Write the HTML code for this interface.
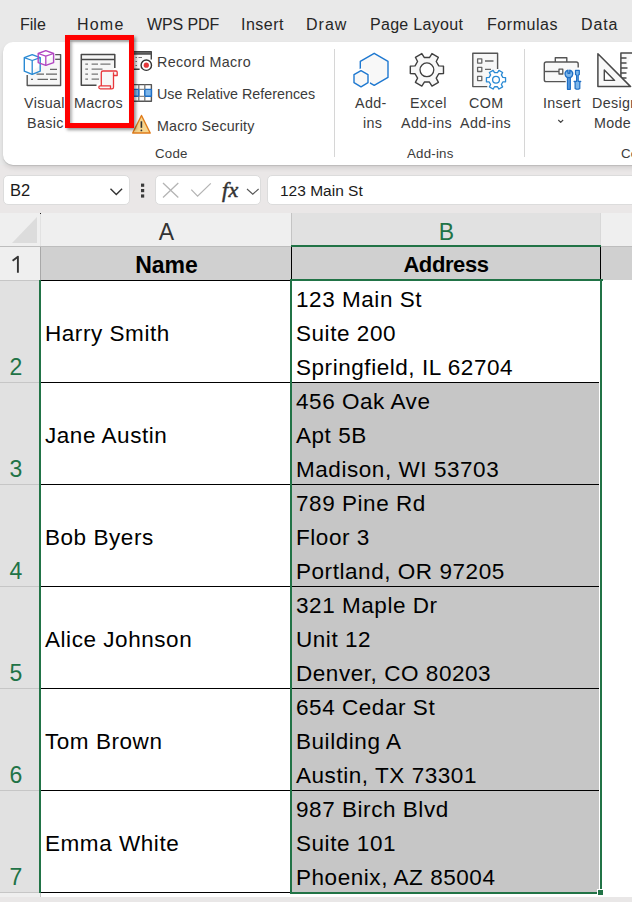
<!DOCTYPE html>
<html><head><meta charset="utf-8">
<style>
*{margin:0;padding:0;box-sizing:border-box}
html,body{width:632px;height:902px;overflow:hidden;background:#e9e9e9;font-family:"Liberation Sans",sans-serif}
.a{position:absolute;white-space:nowrap}
.menu{font-size:16px;color:#262626;top:15px;line-height:20px}
.rib{left:3px;top:42px;width:700px;height:123px;background:#fff;border-radius:10px;box-shadow:0 1px 1px rgba(0,0,0,.12),0 3px 5px rgba(0,0,0,.10)}
.rt{font-size:14.3px;color:#3b3b3b;line-height:17px;letter-spacing:0.35px}
.gl{font-size:13.3px;letter-spacing:0.2px}
.sep{width:1px;background:#d6d6d6}
.grid{left:0;top:213px;width:632px;height:689px;background:#fff}
.hdr{background:#efefef}
.hs{background:#e1e1e1}
.cell{font-size:22.5px;color:#000;line-height:34px;letter-spacing:0.55px}
.rn{font-size:23px;color:#217346;line-height:20px;text-align:center;width:32px;left:0}
</style></head><body>
<!-- menu -->
<div class="a menu" style="left:20px">File</div>
<div class="a menu" style="left:77px;letter-spacing:1.2px">Home</div>
<div class="a menu" style="left:147px;letter-spacing:-0.1px">WPS PDF</div>
<div class="a menu" style="left:241px;letter-spacing:0.5px">Insert</div>
<div class="a menu" style="left:306px;letter-spacing:1px">Draw</div>
<div class="a menu" style="left:370px;letter-spacing:0.3px">Page Layout</div>
<div class="a menu" style="left:487px;letter-spacing:0.55px">Formulas</div>
<div class="a menu" style="left:581px;letter-spacing:0.9px">Data</div>

<!-- ribbon -->
<div class="a" style="left:0;top:165px;width:632px;height:48px;background:#eae7e7"></div>

<div class="a rib"></div>
<div class="a sep" style="left:334px;top:49px;height:108px"></div>
<div class="a sep" style="left:524px;top:49px;height:108px"></div>

<div class="a rt" style="left:24px;top:95px">Visual</div>
<div class="a rt" style="left:27px;top:115px">Basic</div>
<div class="a rt" style="left:74px;top:95px">Macros</div>
<div class="a rt" style="left:157px;top:54px">Record Macro</div>
<div class="a rt" style="left:157px;top:86px;letter-spacing:0">Use Relative References</div>
<div class="a rt" style="left:157px;top:118px;letter-spacing:0.15px">Macro Security</div>
<div class="a rt gl" style="left:155px;top:145px">Code</div>

<div class="a rt" style="left:355px;top:95px">Add-</div>
<div class="a rt" style="left:363px;top:115px">ins</div>
<div class="a rt" style="left:410px;top:95px">Excel</div>
<div class="a rt" style="left:401px;top:115px">Add-ins</div>
<div class="a rt" style="left:469px;top:95px">COM</div>
<div class="a rt" style="left:460px;top:115px">Add-ins</div>
<div class="a rt gl" style="left:407px;top:145px">Add-ins</div>

<div class="a rt" style="left:543px;top:95px">Insert</div>
<div class="a rt" style="left:592px;top:95px">Design</div>
<div class="a rt" style="left:594px;top:115px">Mode</div>
<div class="a rt gl" style="left:621px;top:145px">Code</div>

<svg class="a" style="left:0;top:0" width="632" height="170" viewBox="0 0 632 170" fill="none" stroke-linejoin="round">
<!-- Visual Basic -->
<path d="M55.2,54.6 H60.6 V85.5 H27.2 V74.9" stroke="#555" stroke-width="1.4" fill="#f7f7f7"/>
<path d="M55.2,59.3 H60.6" stroke="#555" stroke-width="1.3"/>
<g stroke="#666" stroke-width="1.3"><path d="M50,69.3H57 M36.5,74.2H44 M46,74.2H57 M31,79.3H33 M37.5,79.3H48 M50,79.3H57"/></g>
<path d="M32.2,54.6 L40.2,57.6 V71.2 L32.2,74.4 L24.3,71.2 V57.6 Z" stroke="#2a8ad4" stroke-width="1.4" fill="none"/>
<path d="M24.3,57.6 L32.2,60.5 L40.2,57.6 M32.2,60.5 V74.4" stroke="#2a8ad4" stroke-width="1.3"/>
<path d="M45.8,50.6 L53.6,53.5 V62.6 L45.8,65.4 L38.2,62.6 V53.5 Z" stroke="#b146c2" stroke-width="1.4" fill="none"/>
<path d="M38.2,53.5 L45.8,56.2 L53.6,53.5 M45.8,56.2 V65.4" stroke="#b146c2" stroke-width="1.3"/>
<!-- Macros -->
<path d="M96.5,85.3 H81.3 V54.6 H114.8 V68" stroke="#484848" stroke-width="1.5" fill="#f6f6f6"/>
<path d="M81.3,59.4 H114.8" stroke="#484848" stroke-width="1.5"/>
<g stroke="#777" stroke-width="1.3"><path d="M85.3,64.1H88 M91.6,64.1H98 M100.4,64.1H110.5 M85.3,69.1H88 M91.6,69.1H102.5 M85.3,74.2H88 M91.6,74.2H98 M85.3,79.1H88 M91.6,79.1H99"/></g>
<path d="M101.3,85.8 V72.8 Q101.3,71 103,71 H116 Q117.2,71 117.2,72.3 V75.5 H113.5 V87.2 Q113.5,88.8 111.8,88.8 H100.3 Q98.8,88.8 98.8,87.3 Q98.8,85.8 100.3,85.8 H110.5 V88.8" stroke="#e8363b" stroke-width="1.3" fill="#f7f7f7"/>
<path d="M113.5,75.5 V72.3" stroke="#e8363b" stroke-width="1.3"/>
<!-- Record Macro -->
<path d="M139.6,69.3 H133 V51.8 H151.3 V59.5" stroke="#444" stroke-width="1.4" fill="#fafafa"/>
<path d="M133,53.5 H151.3" stroke="#555" stroke-width="2.6"/>
<g stroke="#777" stroke-width="1.2"><path d="M135.5,57.5H137 M138.5,57.5H142 M135.5,61.5H137 M135.5,65.5H137"/></g>
<circle cx="146.3" cy="65.2" r="5.2" stroke="#333" stroke-width="1.4" fill="#fff"/>
<circle cx="146.3" cy="65.2" r="2.6" fill="#e5383b"/>
<!-- Relative refs -->
<rect x="133" y="84.6" width="18.4" height="16.6" stroke="#555" stroke-width="1.4" fill="#fff"/>
<path d="M138.8,84.6V101.2 M144.8,84.6V101.2" stroke="#777" stroke-width="1.3"/>
<rect x="133" y="89.4" width="5.8" height="6.9" stroke="#1f6fc5" stroke-width="1.4" fill="#7db6ea"/>
<rect x="144.8" y="89.4" width="6.6" height="6.9" stroke="#1f6fc5" stroke-width="1.4" fill="#7db6ea"/>
<path d="M138.8,89.4H144.8 M138.8,96.3H144.8" stroke="#888" stroke-width="1.2"/>
<!-- warning -->
<path d="M141.5,115.5 L150.2,133 H132.7 Z" stroke="#e07b1a" stroke-width="1.4" fill="#f6d58e"/>
<path d="M141.4,121.3V127.8" stroke="#333" stroke-width="1.6"/>
<circle cx="141.4" cy="130.4" r="0.9" fill="#333"/>
<!-- Add-ins -->
<path d="M374.2,53.3 L388,61.3 V77.4 L374.2,85.4 L360.3,77.4 V61.3 Z" stroke="#1e78d0" stroke-width="1.4" fill="#f8f8f8"/>
<path d="M361,70.6 L368,74.6 V82.7 L361,86.8 L354,82.7 V74.6 Z" stroke="#fff" stroke-width="4" fill="#f8f8f8"/>
<path d="M361,70.6 L368,74.6 V82.7 L361,86.8 L354,82.7 V74.6 Z" stroke="#1e78d0" stroke-width="1.4" fill="#f8f8f8"/>
<!-- gear -->
<path d="M438.77,65.87 L443.49,66.09 L443.49,73.51 L438.77,73.73 L436.24,78.11 L438.41,82.31 L431.98,86.02 L429.43,82.04 L424.37,82.04 L421.82,86.02 L415.39,82.31 L417.56,78.11 L415.03,73.73 L410.31,73.51 L410.31,66.09 L415.03,65.87 L417.56,61.49 L415.39,57.29 L421.82,53.58 L424.37,57.56 L429.43,57.56 L431.98,53.58 L438.41,57.29 L436.24,61.49 Z" stroke="#404040" stroke-width="1.4" fill="#f8f8f8"/>
<circle cx="426.9" cy="69.8" r="6.9" stroke="#404040" stroke-width="1.3" fill="#fff"/>
<!-- COM -->
<path d="M487.3,86.6 H472.8 V53.3 H497.6 V69" stroke="#555" stroke-width="1.4" fill="#f7f7f7"/>
<g stroke="#666" stroke-width="1.3" fill="#fff"><rect x="477.6" y="58.9" width="4.2" height="4.2"/><rect x="477.6" y="67.3" width="4.2" height="4.2"/><rect x="477.6" y="76.4" width="4.2" height="4.2"/></g>
<path d="M485,61H493.5 M485,69.3H491" stroke="#666" stroke-width="1.3"/>
<path d="M502.83,77.44 L505.56,77.56 L505.56,81.84 L502.83,81.96 L501.38,84.49 L502.63,86.91 L498.93,89.05 L497.46,86.75 L494.54,86.75 L493.07,89.05 L489.37,86.91 L490.62,84.49 L489.17,81.96 L486.44,81.84 L486.44,77.56 L489.17,77.44 L490.62,74.91 L489.37,72.49 L493.07,70.35 L494.54,72.65 L497.46,72.65 L498.93,70.35 L502.63,72.49 L501.38,74.91 Z" stroke="#2a8ad4" stroke-width="1.3" fill="#fff"/>
<circle cx="496" cy="79.7" r="3.4" stroke="#2a8ad4" stroke-width="1.3" fill="#fff"/>
<!-- toolbox -->
<path d="M565.7,81.6 H546.2 Q544.3,81.6 544.3,79.7 V63.9 Q544.3,62 546.2,62 H576.3 Q578.2,62 578.2,63.9 V67.4" stroke="#555" stroke-width="1.4" fill="#f8f8f8"/>
<path d="M555.3,62 V57.8 H566.8 V62" stroke="#555" stroke-width="1.4"/>
<path d="M544.3,71.5 H559" stroke="#555" stroke-width="1.4"/>
<rect x="559" y="69.2" width="3.8" height="4.8" stroke="#555" stroke-width="1.3" fill="#fff"/>
<path d="M568,70.1 A3.9,3.9 0 1 0 569.8,70.1 V73.2 H568 Z" stroke="#1f6fc5" stroke-width="1.4" fill="#7db6ea"/>
<path d="M567.5,77.6 H570.3 V89.3 H567.5 Z" fill="#5c9ee0" stroke="#1f6fc5" stroke-width="1.3"/>
<path d="M575.5,70.3 H579.3 V74.5 L578.2,75.3 V81.3 H580.8 L579.8,82.3 V88.5 Q577.4,90 575.1,88.5 V82.3 L574,81.3 H576.6 V75.3 L575.5,74.5 Z" stroke="#1f6fc5" stroke-width="1.2" fill="#7db6ea"/>
<!-- design mode -->
<path d="M620.9,80 V53 H632" stroke="#484848" stroke-width="1.5" fill="#f8f8f8"/>
<path d="M621,58H626.5 M621,63H626.5 M621,68H627.5 M621,73H626.5 M621,78H626.5" stroke="#484848" stroke-width="1.3"/>
<path d="M597.9,53.8 V86.6 H630.6 Z" stroke="#484848" stroke-width="1.5" fill="#f8f8f8"/>
<path d="M604.3,70 V80.4 H614.6 Z" stroke="#484848" stroke-width="1.4" fill="#fff"/>
<path d="M558.3,120 L560.7,122.4 L563.1,120" stroke="#444" stroke-width="1.2"/>
</svg>
<!-- red box -->
<div class="a" style="left:65px;top:35px;width:69px;height:93px;border:5px solid #ff0000;box-shadow:2px 2px 3px rgba(0,0,0,.42), inset 2px 2px 3px rgba(0,0,0,.3)"></div>

<!-- formula bar -->
<div class="a" style="left:3px;top:175px;width:127px;height:30px;background:#fff;border:1px solid #dcdcdc;border-radius:5px"></div>
<div class="a" style="left:10px;top:181px;font-size:16.5px;color:#1a1a1a;line-height:18px">B2</div>
<div class="a" style="left:155px;top:175px;width:106px;height:30px;background:#fff;border:1px solid #dcdcdc;border-radius:5px"></div>
<div class="a" style="left:267px;top:175px;width:400px;height:30px;background:#fff;border:1px solid #dcdcdc;border-radius:5px"></div>
<div class="a" style="left:280px;top:182px;font-size:15.5px;color:#1a1a1a;line-height:18px;letter-spacing:0px">123 Main St</div>

<svg class="a" style="left:0;top:170px" width="632" height="40" viewBox="0 170 632 40" fill="none">
<path d="M110.5,188.8 L116.3,194.6 L122.1,188.8" stroke="#333" stroke-width="1.4"/>
<rect x="141" y="183.6" width="3.2" height="3.2" fill="#3a3a3a"/><rect x="141" y="189" width="3.2" height="3.2" fill="#3a3a3a"/><rect x="141" y="194.4" width="3.2" height="3.2" fill="#3a3a3a"/>
<path d="M163,183 L178.3,197.5 M178.3,183 L163,197.5" stroke="#b4b4b4" stroke-width="1.3"/>
<path d="M191.3,189.6 L197.6,196.2 L210.8,183.4" stroke="#b4b4b4" stroke-width="1.3"/>
<path d="M247,189 L252.8,194.2 L258.6,189" stroke="#555" stroke-width="1.1"/>
</svg>
<div class="a" style="left:222px;top:178px;font-family:'Liberation Serif',serif;font-style:italic;font-size:22px;color:#333;line-height:24px;letter-spacing:0.5px;-webkit-text-stroke:0.5px #333">fx</div>
<!-- grid -->
<div class="a grid"></div>
<div class="a hdr" style="left:0;top:213px;width:632px;height:33px"></div>
<div class="a hs" style="left:292px;top:213px;width:308px;height:32px"></div>
<svg class="a" style="left:0;top:213px" width="40" height="33"><polygon points="12,30 37,30 37,4" fill="#dcdcdc"/></svg>
<div class="a" style="left:40px;top:214px;width:1px;height:32px;background:#e2e2e2"></div><div class="a" style="left:40px;top:213px;width:1px;height:1px;background:#222"></div>
<div class="a" style="left:291px;top:213px;width:1px;height:33px;background:#c4c4c4"></div>
<div class="a" style="left:600px;top:213px;width:1px;height:33px;background:#d8d8d8"></div>
<div class="a" style="left:0;top:246px;width:632px;height:1px;background:#bdbdbd"></div>
<div class="a" style="left:291px;top:245px;width:310px;height:2px;background:#217346"></div>
<div class="a hdr" style="left:0;top:247px;width:40px;height:655px"></div>
<div class="a hs" style="left:0;top:281px;width:39px;height:612px"></div>
<div class="a" style="left:40px;top:247px;width:1px;height:34px;background:#a8a8a8"></div>
<div class="a" style="left:0;top:280px;width:40px;height:1px;background:#c6c6c6"></div>
<div class="a" style="left:0;top:382px;width:40px;height:1px;background:#c6c6c6"></div>
<div class="a" style="left:0;top:484px;width:40px;height:1px;background:#c6c6c6"></div>
<div class="a" style="left:0;top:586px;width:40px;height:1px;background:#c6c6c6"></div>
<div class="a" style="left:0;top:688px;width:40px;height:1px;background:#c6c6c6"></div>
<div class="a" style="left:0;top:790px;width:40px;height:1px;background:#c6c6c6"></div>
<div class="a" style="left:0;top:892px;width:40px;height:1px;background:#c6c6c6"></div>
<div class="a" style="left:39px;top:280px;width:2px;height:613px;background:#217346"></div>
<div class="a" style="left:41px;top:247px;width:591px;height:33px;background:#d0d0d0"></div>
<div class="a" style="left:292px;top:383px;width:307px;height:509px;background:#c6c6c6"></div>
<div class="a" style="left:41px;top:280px;width:560px;height:1px;background:#000"></div>
<div class="a" style="left:41px;top:382px;width:558px;height:1px;background:#000"></div>
<div class="a" style="left:41px;top:484px;width:558px;height:1px;background:#000"></div>
<div class="a" style="left:41px;top:586px;width:558px;height:1px;background:#000"></div>
<div class="a" style="left:41px;top:688px;width:558px;height:1px;background:#000"></div>
<div class="a" style="left:41px;top:790px;width:558px;height:1px;background:#000"></div>
<div class="a" style="left:41px;top:892px;width:558px;height:1px;background:#000"></div>
<div class="a" style="left:291px;top:247px;width:1px;height:646px;background:#000"></div>
<div class="a" style="left:600px;top:247px;width:1px;height:34px;background:#000"></div>
<div class="a" style="left:290px;top:279px;width:313px;height:2px;background:#217346"></div>
<div class="a" style="left:290px;top:279px;width:2px;height:615px;background:#217346"></div>
<div class="a" style="left:600px;top:279px;width:2px;height:611px;background:#217346"></div>
<div class="a" style="left:290px;top:892px;width:308px;height:2px;background:#217346"></div>
<div class="a" style="left:597px;top:889px;width:7px;height:7px;background:#fff"></div>
<div class="a" style="left:598px;top:890px;width:5px;height:5px;background:#217346"></div>
<div class="a" style="left:0;top:897px;width:632px;height:5px;background:#e9e7e7"></div>
<div class="a" style="left:40px;top:893px;width:1px;height:4px;background:#c6c6c6"></div>
<div class="a rn" style="left:41px;width:251px;top:222px;color:#333">A</div>
<div class="a rn" style="left:292px;width:309px;top:222px">B</div>
<svg class="a" style="left:0;top:250px" width="40" height="30" viewBox="0 250 40 30"><path d="M12.6,260.8 L17.9,256.7 V272.8" stroke="#333" stroke-width="1.9" fill="none" stroke-linejoin="round"/></svg>
<div class="a rn" style="top:357px">2</div>
<div class="a rn" style="top:459px">3</div>
<div class="a rn" style="top:561px">4</div>
<div class="a rn" style="top:663px">5</div>
<div class="a rn" style="top:765px">6</div>
<div class="a rn" style="top:867px">7</div>
<div class="a cell" style="left:41px;width:250px;text-align:center;top:248px;font-weight:bold;font-size:23px;letter-spacing:0;padding-left:1px">Name</div>
<div class="a cell" style="left:292px;width:308px;text-align:center;top:248px;font-weight:bold;font-size:22px;letter-spacing:-0.4px">Address</div>
<div class="a cell" style="left:45px;top:317px">Harry Smith</div>
<div class="a cell" style="left:296px;top:283px">123 Main St</div>
<div class="a cell" style="left:296px;top:317px">Suite 200</div>
<div class="a cell" style="left:296px;top:351px">Springfield, IL 62704</div>
<div class="a cell" style="left:45px;top:419px">Jane Austin</div>
<div class="a cell" style="left:296px;top:385px">456 Oak Ave</div>
<div class="a cell" style="left:296px;top:419px">Apt 5B</div>
<div class="a cell" style="left:296px;top:453px">Madison, WI 53703</div>
<div class="a cell" style="left:45px;top:521px">Bob Byers</div>
<div class="a cell" style="left:296px;top:487px">789 Pine Rd</div>
<div class="a cell" style="left:296px;top:521px">Floor 3</div>
<div class="a cell" style="left:296px;top:555px">Portland, OR 97205</div>
<div class="a cell" style="left:45px;top:623px">Alice Johnson</div>
<div class="a cell" style="left:296px;top:589px">321 Maple Dr</div>
<div class="a cell" style="left:296px;top:623px">Unit 12</div>
<div class="a cell" style="left:296px;top:657px">Denver, CO 80203</div>
<div class="a cell" style="left:45px;top:725px">Tom Brown</div>
<div class="a cell" style="left:296px;top:691px">654 Cedar St</div>
<div class="a cell" style="left:296px;top:725px">Building A</div>
<div class="a cell" style="left:296px;top:759px">Austin, TX 73301</div>
<div class="a cell" style="left:45px;top:827px">Emma White</div>
<div class="a cell" style="left:296px;top:793px">987 Birch Blvd</div>
<div class="a cell" style="left:296px;top:827px">Suite 101</div>
<div class="a cell" style="left:296px;top:861px">Phoenix, AZ 85004</div>
</body></html>
